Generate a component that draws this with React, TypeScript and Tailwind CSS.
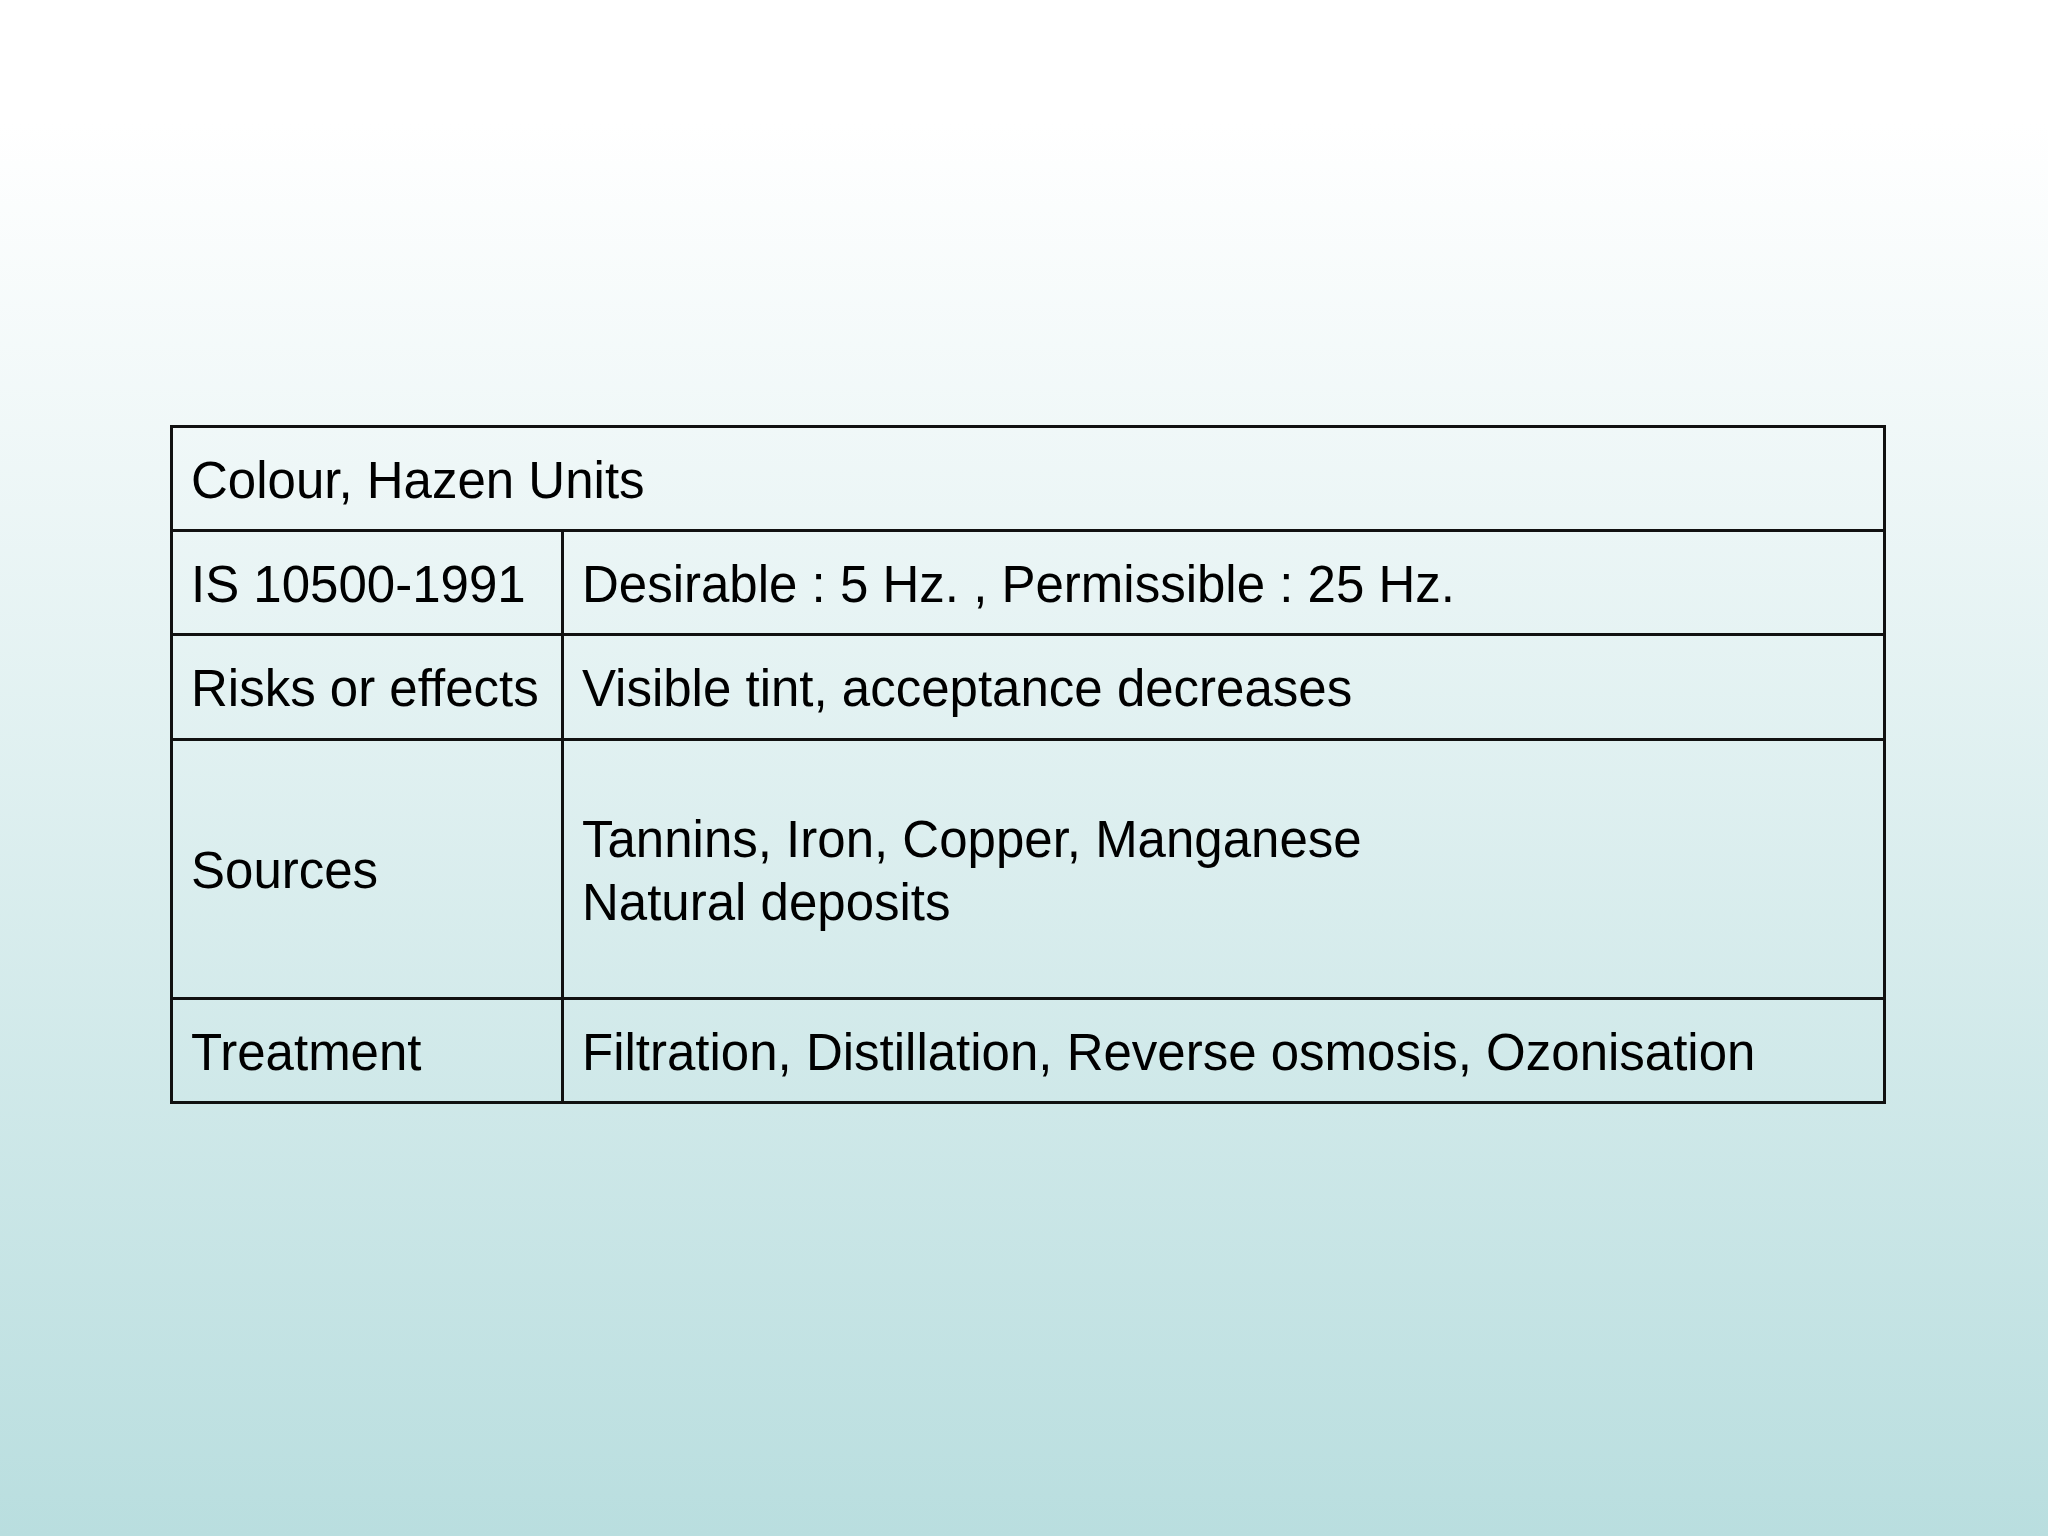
import React from "react";

export default function App() {
  const cell = "flex items-center pt-[3px] pl-[18px]";
  return (
    <div
      className="w-[2048px] h-[1536px] overflow-hidden bg-gradient-to-b from-[#ffffff] from-[8%] to-[#b9dedf] text-black"
      style={{ fontFamily: '"Liberation Sans", Arial, sans-serif' }}
    >
      <div className="pt-[425px] pl-[170px]">
        <div className="w-[1716px] border-[3px] border-[#111] text-[51px] leading-[63px]">
          <div className={`h-[101px] ${cell}`}>Colour, Hazen Units</div>
          <div className="grid grid-cols-[391px_1fr] h-[104px] border-t-[3px] border-[#111]">
            <div className={`${cell} border-r-[3px] border-[#111]`}>IS 10500-1991</div>
            <div className={cell}>Desirable : 5 Hz. , Permissible : 25 Hz.</div>
          </div>
          <div className="grid grid-cols-[391px_1fr] h-[105px] border-t-[3px] border-[#111]">
            <div className={`${cell} border-r-[3px] border-[#111]`}>Risks or effects</div>
            <div className={cell}>Visible tint, acceptance decreases</div>
          </div>
          <div className="grid grid-cols-[391px_1fr] h-[259px] border-t-[3px] border-[#111]">
            <div className={`${cell} border-r-[3px] border-[#111]`}>Sources</div>
            <div className={`${cell} flex-col items-start justify-center`}>
              <span>Tannins, Iron, Copper, Manganese</span>
              <span>Natural deposits</span>
            </div>
          </div>
          <div className="grid grid-cols-[391px_1fr] h-[104px] border-t-[3px] border-[#111]">
            <div className={`${cell} border-r-[3px] border-[#111]`}>Treatment</div>
            <div className={cell}>Filtration, Distillation, Reverse osmosis, Ozonisation</div>
          </div>
        </div>
      </div>
    </div>
  );
}
